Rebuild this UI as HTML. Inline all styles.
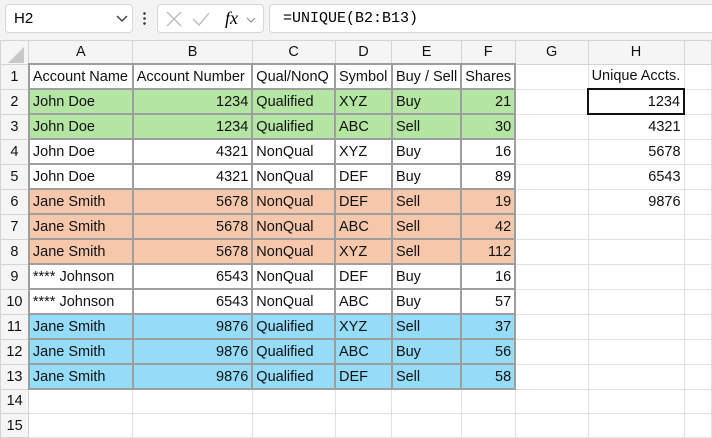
<!DOCTYPE html><html><head><style>
body{margin:0;width:712px;height:423px;overflow:hidden;background:#fff;font-family:"Liberation Sans",sans-serif;position:relative}
.top{position:absolute;left:0;top:0;width:712px;height:40px;background:#f3f3f3}
.box{position:absolute;background:#fff;border:1px solid #d6d6d6;border-radius:4px}
table{position:absolute;left:0;top:40px;border-collapse:collapse;table-layout:fixed;font-size:14.5px;color:#111}
td{height:23px;line-height:18px;border:1px solid #e1e1e1;padding:0 3px;white-space:nowrap;overflow:hidden}
tr.h td{background:#f5f5f5;text-align:center;height:22px;border-color:#d4d4d4}
td.r{background:#f5f5f5;text-align:center;border-color:#d4d4d4}
td.d{border:2px solid #9e9e9e}
.n{text-align:right}
.g{background:#b4e5a2}.o{background:#f7c7ac}.b{background:#94dcf8}
td.sel{border:2px solid #111}
</style></head><body>
<div class="top">
<div class="box" style="left:5px;top:4px;width:126px;height:27px"><span style="position:absolute;left:8px;top:5px;font-size:15px">H2</span><svg style="position:absolute;left:110px;top:10px" width="12" height="8"><path d="M1 1l5 5 5-5" stroke="#333" fill="none" stroke-width="1.3"/></svg></div>
<div style="position:absolute;left:143px;top:11px;width:3px;height:15px;background:radial-gradient(circle,#444 1.2px,transparent 1.5px) 0 0/3px 5px"></div>
<div class="box" style="left:157px;top:4px;width:105px;height:27px">
<svg style="position:absolute;left:8px;top:6px" width="16" height="16"><path d="M1 1l14 14M15 1L1 15" stroke="#bbb" stroke-width="1.3"/></svg>
<svg style="position:absolute;left:34px;top:6px" width="18" height="16"><path d="M1 8l6 6L17 2" stroke="#bbb" fill="none" stroke-width="1.3"/></svg>
<span style="position:absolute;left:67px;top:3px;font-family:'Liberation Serif',serif;font-style:italic;font-size:18px">fx</span>
<svg style="position:absolute;left:88px;top:12px" width="10" height="7"><path d="M1 1l4 4 4-4" stroke="#888" fill="none"/></svg></div>
<div class="box" style="left:269px;top:4px;width:450px;height:27px"><span style="position:absolute;left:13px;top:5px;font-family:'Liberation Mono',monospace;font-size:15px">=UNIQUE(B2:B13)</span></div>
</div>
<table>
<colgroup><col style="width:29px"><col style="width:104px"><col style="width:120px"><col style="width:83px"><col style="width:57px"><col style="width:69px"><col style="width:50px"><col style="width:80px"><col style="width:96px"><col style="width:30px"></colgroup>
<tr class="h"><td></td><td>A</td><td>B</td><td>C</td><td>D</td><td>E</td><td>F</td><td>G</td><td>H</td><td></td></tr>
<tr><td class="r">1</td><td class="d">Account Name</td><td class="d">Account Number</td><td class="d">Qual/NonQ</td><td class="d">Symbol</td><td class="d">Buy / Sell</td><td class="d">Shares</td><td></td><td>Unique Accts.</td><td></td></tr>
<tr><td class="r">2</td><td class="d g">John Doe</td><td class="d g n">1234</td><td class="d g">Qualified</td><td class="d g">XYZ</td><td class="d g">Buy</td><td class="d g n">21</td><td></td><td class="n sel">1234</td><td></td></tr>
<tr><td class="r">3</td><td class="d g">John Doe</td><td class="d g n">1234</td><td class="d g">Qualified</td><td class="d g">ABC</td><td class="d g">Sell</td><td class="d g n">30</td><td></td><td class="n">4321</td><td></td></tr>
<tr><td class="r">4</td><td class="d">John Doe</td><td class="d n">4321</td><td class="d">NonQual</td><td class="d">XYZ</td><td class="d">Buy</td><td class="d n">16</td><td></td><td class="n">5678</td><td></td></tr>
<tr><td class="r">5</td><td class="d">John Doe</td><td class="d n">4321</td><td class="d">NonQual</td><td class="d">DEF</td><td class="d">Buy</td><td class="d n">89</td><td></td><td class="n">6543</td><td></td></tr>
<tr><td class="r">6</td><td class="d o">Jane Smith</td><td class="d o n">5678</td><td class="d o">NonQual</td><td class="d o">DEF</td><td class="d o">Sell</td><td class="d o n">19</td><td></td><td class="n">9876</td><td></td></tr>
<tr><td class="r">7</td><td class="d o">Jane Smith</td><td class="d o n">5678</td><td class="d o">NonQual</td><td class="d o">ABC</td><td class="d o">Sell</td><td class="d o n">42</td><td></td><td></td><td></td></tr>
<tr><td class="r">8</td><td class="d o">Jane Smith</td><td class="d o n">5678</td><td class="d o">NonQual</td><td class="d o">XYZ</td><td class="d o">Sell</td><td class="d o n">112</td><td></td><td></td><td></td></tr>
<tr><td class="r">9</td><td class="d">**** Johnson</td><td class="d n">6543</td><td class="d">NonQual</td><td class="d">DEF</td><td class="d">Buy</td><td class="d n">16</td><td></td><td></td><td></td></tr>
<tr><td class="r">10</td><td class="d">**** Johnson</td><td class="d n">6543</td><td class="d">NonQual</td><td class="d">ABC</td><td class="d">Buy</td><td class="d n">57</td><td></td><td></td><td></td></tr>
<tr><td class="r">11</td><td class="d b">Jane Smith</td><td class="d b n">9876</td><td class="d b">Qualified</td><td class="d b">XYZ</td><td class="d b">Sell</td><td class="d b n">37</td><td></td><td></td><td></td></tr>
<tr><td class="r">12</td><td class="d b">Jane Smith</td><td class="d b n">9876</td><td class="d b">Qualified</td><td class="d b">ABC</td><td class="d b">Buy</td><td class="d b n">56</td><td></td><td></td><td></td></tr>
<tr><td class="r">13</td><td class="d b">Jane Smith</td><td class="d b n">9876</td><td class="d b">Qualified</td><td class="d b">DEF</td><td class="d b">Sell</td><td class="d b n">58</td><td></td><td></td><td></td></tr>
<tr><td class="r">14</td><td></td><td></td><td></td><td></td><td></td><td></td><td></td><td></td><td></td></tr>
<tr><td class="r">15</td><td></td><td></td><td></td><td></td><td></td><td></td><td></td><td></td><td></td></tr>
</table>
<svg style="position:absolute;left:8px;top:47px" width="16" height="16"><path d="M16 0V16H0Z" fill="#c8c8c8"/></svg>
</body></html>
